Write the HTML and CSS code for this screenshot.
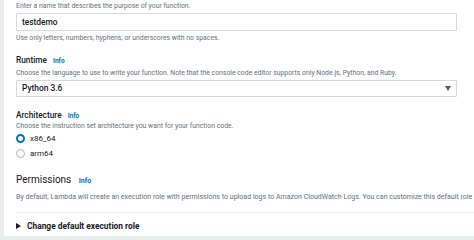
FILE: index.html
```html
<!DOCTYPE html>
<html lang="en">
<head>
<meta charset="UTF-8">
<meta name="viewport" content="width=device-width, initial-scale=1.0">
<title>Create function</title>
<link rel="stylesheet" href="styles.css">
</head>
<body>

  <div class="panel">
    <div class="field">
      <p class="hint">Enter a name that describes the purpose of your function.</p>
      <div class="input">testdemo</div>
      <p class="hint hint-after">Use only letters, numbers, hyphens, or underscores with no spaces.</p>
    </div>

    <div class="field">
      <div class="label">Runtime <a class="info">Info</a></div>
      <p class="hint">Choose the language to use to write your function. Note that the console code editor supports only Node.js, Python, and Ruby.</p>
      <div class="input select">
        <span>Python 3.6</span>
        <span class="caret"></span>
      </div>
    </div>

    <div class="field arch">
      <div class="label">Architecture <a class="info">Info</a></div>
      <p class="hint">Choose the instruction set architecture you want for your function code.</p>
      <div class="radio checked"><span class="dot"></span>x86_64</div>
      <div class="radio"><span class="dot"></span>arm64</div>
    </div>

    <div class="section">
      <div class="heading">Permissions <a class="info">Info</a></div>
      <p class="hint">By default, Lambda will create an execution role with permissions to upload logs to Amazon CloudWatch Logs. You can customize this default role</p>
    </div>

    <div class="expander">
      <span class="arrow"></span>Change default execution role
    </div>
  </div>

</body>
</html>
```

FILE: styles.css
```css
  body {
    margin: 0;
    background-color: #eaeded;
    font-family: Roboto, "Open Sans", Arial, sans-serif;
    color: #16191f;
  }
  .panel {
    margin-left: 4px;
    margin-bottom: 7px;
    background-color: #fff;
    padding-left: 12px;
    overflow: hidden;
  }
  p {
    margin: 0;
  }
  .hint {
    font-size: 6.85px;
    line-height: 12px;
    color: #687078;
    white-space: nowrap;
  }
  .hint-after {
    margin-top: 1px;
  }
  .input {
    margin: 1px 17px 0 0;
    height: 16px;
    border: 1px solid #d5dbdb;
    border-radius: 1px;
    padding: 0 5px;
    font-size: 8.4px;
    font-weight: 500;
    line-height: 16px;
    color: #16191f;
  }
  .field {
    margin-bottom: 10px;
  }
  .label {
    font-size: 8.3px;
    font-weight: 500;
    line-height: 12px;
  }
  .info {
    font-size: 6.5px;
    font-weight: 700;
    color: #0073bb;
    margin-left: 4px;
  }
  .select {
    height: 15px;
    line-height: 15px;
    display: flex;
    justify-content: space-between;
    align-items: center;
  }
  .caret {
    width: 0;
    height: 0;
    border-left: 3px solid transparent;
    border-right: 3px solid transparent;
    border-top: 5px solid #545b64;
  }
  .arch {
    margin-top: 12px;
    margin-bottom: 0;
  }
  .arch .hint {
    line-height: 9px;
  }
  .radio {
    display: flex;
    align-items: center;
    font-size: 8px;
    line-height: 15px;
    color: #16191f;
  }
  .dot {
    width: 9px;
    height: 9px;
    box-sizing: border-box;
    border: 1px solid #aab7b8;
    border-radius: 50%;
    margin-right: 5px;
  }
  .checked .dot {
    border: 2.5px solid #0073bb;
  }
  .section {
    padding-top: 10px;
    padding-bottom: 9px;
    border-bottom: 1px solid #eaeded;
  }
  .heading {
    font-size: 10px;
    line-height: 18px;
    color: #16191f;
  }
  .heading .info {
    font-size: 7px;
    margin-left: 5px;
  }
  .section .hint {
    font-size: 7.05px;
    margin-top: 1px;
  }
  .expander {
    box-sizing: border-box;
    display: flex;
    align-items: center;
    height: 23px;
    padding-top: 3px;
    font-size: 8.4px;
    font-weight: 700;
    color: #16191f;
  }
  .arrow {
    width: 0;
    height: 0;
    border-top: 3px solid transparent;
    border-bottom: 3px solid transparent;
    border-left: 5px solid #16191f;
    margin-right: 6px;
  }
```
